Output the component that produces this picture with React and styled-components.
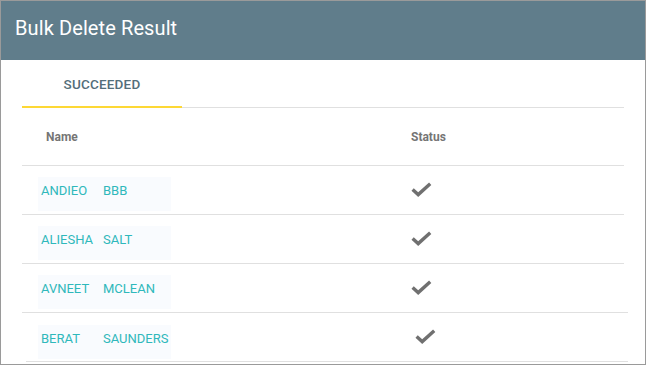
import React from "react";
import styled, { createGlobalStyle } from "styled-components";

const Global = createGlobalStyle`
  html, body { margin: 0; padding: 0; background: #ffffff; }
  body { font-family: Roboto, "Noto Sans", Arial, sans-serif; }
  * { box-sizing: border-box; }
`;

const Dialog = styled.div`
  width: 646px;
  height: 365px;
  border: 1px solid #9a9a9a;
  background: #ffffff;
  overflow: hidden;
  display: flex;
  flex-direction: column;
`;

const Header = styled.header`
  height: 59px;
  flex: none;
  background: #607d8b;
  display: flex;
  align-items: center;
  padding: 0 0 5px 14px;
`;

const Title = styled.h1`
  margin: 0;
  font-size: 20px;
  font-weight: 400;
  color: #ffffff;
  letter-spacing: 0.1px;
`;

const Body = styled.div`
  padding: 0 21px 0 21px;
`;

const TabBar = styled.div`
  display: flex;
  height: 48px;
  border-bottom: 1px solid #e0e0e0;
`;

const Tab = styled.div`
  position: relative;
  width: 160px;
  display: flex;
  align-items: center;
  justify-content: center;
  font-size: 13.5px;
  font-weight: 500;
  color: #546e7a;
  letter-spacing: 0.2px;
  &::after {
    content: "";
    position: absolute;
    left: 0;
    right: 0;
    bottom: -1px;
    height: 2px;
    background: ${(p) => (p.$active ? "#fdd835" : "transparent")};
  }
`;

const Row = styled.div`
  position: relative;
  display: grid;
  grid-template-columns: 365px 1fr;
  height: ${(p) => (p.$head ? "58px" : "49px")};
  border-bottom: ${(p) => (p.$shifted ? "none" : "1px solid #e0e0e0")};
  ${(p) =>
    p.$shifted &&
    `
    &::before, &::after {
      content: "";
      position: absolute;
      left: 4px;
      right: -4px;
      height: 1px;
      background: #e0e0e0;
    }
    &::before { top: -1px; }
    &::after { bottom: 0; }
  `}
`;

const HeadCell = styled.div`
  display: flex;
  align-items: center;
  padding-left: 24px;
  padding-top: 1px;
  font-size: 12px;
  font-weight: 700;
  color: #757575;
`;

const NameCell = styled.div`
  display: flex;
  align-items: flex-end;
  padding: 0 0 3px 16px;
`;

const NameBox = styled.div`
  width: 133px;
  height: 34px;
  padding: 6px 0 0 3px;
  background: #f9fbfe;
  display: flex;
  line-height: 16px;
  font-size: 13px;
  color: #2fb8bb;
`;

const NamePart = styled.span`
  width: ${(p) => p.$w || "auto"};
  flex: none;
`;

const StatusCell = styled.div`
  display: flex;
  align-items: center;
  padding-left: ${(p) => (p.$shifted ? "28px" : "24px")};
  padding-bottom: 2px;
`;

const Check = () => (
  <svg width="21" height="15" viewBox="0 0 21 15" fill="none">
    <polyline
      points="1.6,7.6 7.2,12.6 19.2,1.8"
      stroke="#707070"
      strokeWidth="3.4"
      strokeLinejoin="miter"
      strokeLinecap="butt"
    />
  </svg>
);

const people = [
  ["ANDIEO", "BBB"],
  ["ALIESHA", "SALT"],
  ["AVNEET", "MCLEAN"],
  ["BERAT", "SAUNDERS"],
];

export default function App() {
  return (
    <>
      <Global />
      <Dialog>
        <Header>
          <Title>Bulk Delete Result</Title>
        </Header>
        <Body>
          <TabBar>
            <Tab $active>SUCCEEDED</Tab>
          </TabBar>
          <Row $head>
            <HeadCell>Name</HeadCell>
            <HeadCell>Status</HeadCell>
          </Row>
          {people.map(([first, last], i) => {
            const shifted = i === people.length - 1;
            return (
              <Row key={first} $shifted={shifted}>
                <NameCell>
                  <NameBox>
                    <NamePart $w="62px">{first}</NamePart>
                    <NamePart>{last}</NamePart>
                  </NameBox>
                </NameCell>
                <StatusCell $shifted={shifted}>
                  <Check />
                </StatusCell>
              </Row>
            );
          })}
        </Body>
      </Dialog>
    </>
  );
}
